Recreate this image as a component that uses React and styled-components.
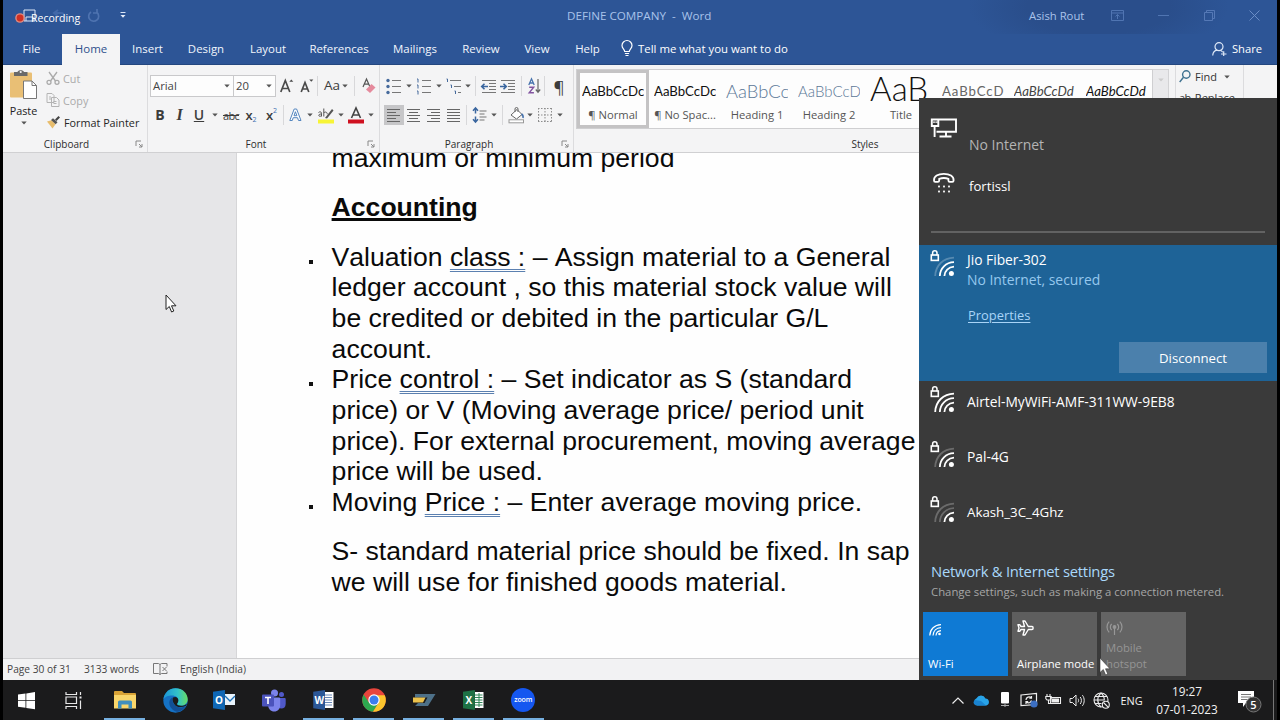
import React from "react";
import styled, { createGlobalStyle } from "styled-components";

const Global = createGlobalStyle`
  * { box-sizing: border-box; }
  html, body { margin: 0; padding: 0; background: #000; overflow: hidden; }
  body { font-family: "Open Sans", "Noto Sans", sans-serif; }
  svg { display: block; flex: none; overflow: visible; }
`;

const Screen = styled.div`
  position: relative;
  width: 1280px;
  height: 720px;
  background: #000;
  padding: 0 3px;
  display: flex;
  flex-direction: column;
  overflow: hidden;
  white-space: pre;
`;

/* ---------- title bar and tabs ---------- */
const TitleBar = styled.header`
  flex: none;
  height: 34px;
  background: radial-gradient(ellipse 130px 50px at 86% 20%, #2a4e8b 55%, #2d559600 100%), #2d5596;
  display: flex;
  align-items: center;
  color: #a9c3ea;
  font-size: 11.3px;
  padding-bottom: 3px;
`;
const QuickAccess = styled.div`
  width: 564px;
  display: flex;
  align-items: center;
  padding-left: 18px;
`;
const DocTitle = styled.div`
  width: 462px;
  font-size: 11.65px;
`;
const UserName = styled.div`
  width: 82px;
`;
const WindowButtons = styled.div`
  display: flex;
  align-items: center;
  gap: 34px;
`;
const TabRow = styled.nav`
  flex: none;
  height: 31px;
  background: #2d5596;
  border-bottom: 1px solid #24477f;
  display: flex;
  color: #fff;
  font-size: 11.45px;
`;
const Tab = styled.div`
  width: ${(p) => p.$w}px;
  display: flex;
  align-items: center;
  justify-content: center;
  padding-bottom: 1px;
  background: ${(p) => (p.$active ? "#f4f4f5" : "transparent")};
  color: ${(p) => (p.$active ? "#2d4f8c" : "#f2f6fd")};
  ${(p) => p.$active && "height: 31px; padding-bottom: 2px;"}
`;
const TellMe = styled.div`
  display: flex;
  align-items: center;
  gap: 4px;
  padding: 0 0 1px 8px;
  font-size: 11.4px;
`;
const Share = styled.div`
  margin-left: auto;
  padding: 0 15px 1px 0;
  display: flex;
  align-items: center;
  gap: 5px;
  font-size: 11.2px;
`;

/* ---------- ribbon ---------- */
const Ribbon = styled.section`
  flex: none;
  height: 88px;
  background: #f4f4f5;
  border-bottom: 1px solid #d0d0d2;
  display: flex;
  color: #333;
`;
const Group = styled.div`
  width: ${(p) => p.$w}px;
  flex: none;
  display: flex;
  flex-direction: column;
  border-right: 1px solid #dcdcde;
  overflow: hidden;
`;
const GroupBody = styled.div`
  height: 71px;
  padding: ${(p) => p.$pad || "0"};
  display: flex;
  flex-direction: ${(p) => (p.$row ? "row" : "column")};
`;
const GroupFooter = styled.div`
  height: 16px;
  display: flex;
  align-items: center;
  font-size: 10px;
  line-height: 14px;
  color: #2d2d2d;
  padding-right: 4px;
`;
const FooterLabel = styled.div`
  flex: 1;
  text-align: center;
  padding-right: ${(p) => p.$shift || 0}px;
`;
const PasteButton = styled.div`
  width: 41px;
  display: flex;
  flex-direction: column;
  align-items: center;
  font-size: 10.8px;
  color: #222;
  gap: 3px;
`;
const CommandList = styled.div`
  display: flex;
  flex-direction: column;
  padding-left: 2px;
  margin-top: -2px;
`;
const Command = styled.div`
  height: 22px;
  display: flex;
  align-items: center;
  gap: 3px;
  font-size: 10.8px;
  color: ${(p) => (p.$off ? "#aaa" : "#262626")};
`;
const ToolRow = styled.div`
  height: ${(p) => p.$h || 24}px;
  display: flex;
  align-items: center;
`;
const Cell = styled.div`
  width: ${(p) => p.$w}px;
  height: 20px;
  flex: none;
  display: flex;
  align-items: center;
  justify-content: center;
  background: ${(p) => (p.$on ? "#c6c6c8" : "transparent")};
  font-size: ${(p) => p.$size || 13}px;
  line-height: 1;
  color: #3c3c3c;
`;
const Divider = styled.div`
  width: 1px;
  height: 20px;
  flex: none;
  background: #d8d8da;
  margin: 0 ${(p) => p.$r}px 0 ${(p) => p.$l}px;
`;
const Combo = styled.div`
  width: ${(p) => p.$w}px;
  height: 22px;
  flex: none;
  border: 1px solid #c9c9cb;
  background: #fdfdfd;
  display: flex;
  align-items: center;
  justify-content: space-between;
  padding: 0 3px 1px 2px;
  margin-right: -1px;
  font-size: 11.3px;
  color: #444;
`;
const Glyph = styled.span`
  font-weight: ${(p) => p.$weight || 400};
  font-style: ${(p) => (p.$italic ? "italic" : "normal")};
  font-family: ${(p) => (p.$serif ? '"Liberation Serif", serif' : "inherit")};
  text-decoration: ${(p) => p.$line || "none"};
  letter-spacing: ${(p) => p.$ls || 0}px;
`;
const Sub = styled.span`
  font-size: 7px;
  color: #3b6db0;
  align-self: ${(p) => (p.$up ? "flex-start" : "flex-end")};
  padding: 2px 0;
`;
const Gallery = styled.div`
  width: 577px;
  height: 60px;
  border: 1px solid #cfcfd1;
  background: #fdfdfd;
  display: flex;
`;
const StyleTile = styled.div`
  width: 72px;
  height: 58px;
  flex: none;
  display: flex;
  flex-direction: column;
  align-items: center;
  ${(p) => p.$on && "box-shadow: inset 0 0 0 3px #c4c3c4;"}
`;
const Sample = styled.div`
  width: 62px;
  height: 37px;
  overflow: hidden;
  display: flex;
  align-items: center;
  font-family: Lato, sans-serif;
  font-size: ${(p) => p.$size || 13.2}px;
  font-weight: ${(p) => p.$weight || 400};
  font-style: ${(p) => (p.$italic ? "italic" : "normal")};
  letter-spacing: ${(p) => p.$ls || 0}px;
  line-height: 1;
  color: ${(p) => p.$color || "#111"};
  padding-top: ${(p) => (p.$pt === undefined ? 6 : p.$pt)}px;
`;
const StyleName = styled.div`
  font-size: 11.2px;
  line-height: 15px;
  color: #555;
`;
const ScrollColumn = styled.div`
  width: 16px;
  height: 60px;
  border: 1px solid #d3d3d5;
  border-left: 0;
  background: #e9e9eb;
  display: flex;
  justify-content: center;
  padding-top: 8px;
`;
const EditCommand = styled.div`
  height: 21px;
  display: flex;
  align-items: center;
  gap: 4px;
  font-size: 11px;
  color: #333;
`;

/* ---------- document ---------- */
const Workspace = styled.main`
  flex: none;
  height: 505px;
  display: flex;
  background: #e6e6e8;
  overflow: hidden;
`;
const Gutter = styled.div`
  width: 234px;
  flex: none;
  border-right: 1px solid #d6d6d8;
`;
const Page = styled.article`
  flex: 1;
  background: #fefefe;
  padding-left: 94.6px;
  font-family: "Liberation Sans", Arial, sans-serif;
  font-size: 26.6px;
  font-kerning: none;
  line-height: 30.67px;
  color: #0a0a0a;
`;
const Para = styled.p`
  margin: ${(p) => p.$mt}px 0 0;
`;
const Heading = styled.h1`
  margin: 18.6px 0;
  font-size: 26.6px;
  line-height: 30.67px;
  font-weight: 700;
  text-decoration: underline;
  text-decoration-thickness: 3px;
  text-underline-offset: 2.4px;
`;
const List = styled.ul`
  margin: 0;
  padding: 0;
  list-style: none;
`;
const Item = styled.li`
  display: flex;
  margin-left: -23px;
  &::before {
    content: "";
    flex: none;
    width: 4px;
    height: 4px;
    margin: 18px 19px 0 0;
    background: #111;
  }
`;
const Grammar = styled.span`
  text-decoration: underline double #5b80b0 1px;
  text-underline-offset: 3px;
`;

/* ---------- status bar ---------- */
const StatusBar = styled.footer`
  flex: none;
  height: 22px;
  background: #f2f2f3;
  border-top: 1px solid #cfcfd1;
  display: flex;
  align-items: center;
  padding: 0 0 2px 4px;
  font-size: 10.2px;
  color: #444;
`;
const StatusText = styled.div`
  width: ${(p) => p.$w}px;
`;

/* ---------- taskbar ---------- */
const Taskbar = styled.div`
  flex: none;
  height: 40px;
  background: #1b1b1c;
  display: flex;
  color: #f2f2f2;
`;
const TaskButton = styled.div`
  width: ${(p) => p.$w || 49.9}px;
  height: 40px;
  display: flex;
  align-items: center;
  justify-content: center;
  background: ${(p) => (p.$open ? "linear-gradient(#76b0e0, #76b0e0) center bottom / 41px 2.5px no-repeat" : "none")};
`;
const Tray = styled.div`
  margin-left: auto;
  width: 330px;
  display: flex;
  align-items: center;
`;
const TrayCell = styled.div`
  width: ${(p) => p.$w}px;
  display: flex;
  justify-content: center;
  font-size: 10.9px;
`;
const Clock = styled.div`
  width: 83px;
  padding-right: 7px;
  text-align: center;
  font-size: 11.8px;
  line-height: 18px;
`;
const PeekEdge = styled.div`
  margin-left: auto;
  width: 4px;
  height: 40px;
  border-left: 1px solid #777;
`;

/* ---------- network flyout ---------- */
const Flyout = styled.aside`
  position: absolute;
  left: 919px;
  top: 98px;
  width: 358px;
  height: 582px;
  background: #3a3a3a;
  color: #fff;
  display: flex;
  flex-direction: column;
`;
const NetRow = styled.div`
  flex: none;
  height: ${(p) => p.$h}px;
  padding: ${(p) => p.$pt}px 0 0 11px;
  display: flex;
  align-items: flex-start;
`;
const NetIcon = styled.div`
  width: ${(p) => p.$w || 37}px;
  padding-left: ${(p) => p.$pl || 0}px;
  flex: none;
`;
const NetName = styled.div`
  font-size: ${(p) => p.$size || 13.8}px;
  line-height: ${(p) => p.$lh || 20}px;
  color: ${(p) => p.$color || "#fff"};
  padding-top: ${(p) => p.$pt || 0}px;
`;
const Rule = styled.div`
  flex: none;
  height: 2px;
  margin: 0 12px 12px;
  background: #626262;
`;
const Connected = styled.div`
  flex: none;
  height: 136px;
  background: #1e6397;
  display: flex;
  flex-direction: column;
`;
const PropertiesLink = styled.a`
  margin: 5px 0 0 49px;
  font-size: 12.9px;
  line-height: 20px;
  color: #a9d4f7;
  text-decoration: underline;
  text-underline-offset: 2px;
`;
const Disconnect = styled.button`
  width: 148px;
  height: 31px;
  margin: 17px 10px 0 auto;
  border: 0;
  padding: 0;
  background: #4b80ac;
  color: #fff;
  font: 13.2px "Open Sans", sans-serif;
  flex: none;
`;
const SettingsLink = styled.div`
  padding: 24px 0 0 12px;
  font-size: 14.8px;
  line-height: 22px;
  letter-spacing: -0.25px;
  color: #a9d8fb;
`;
const SettingsHint = styled.div`
  padding: 1px 0 0 12px;
  font-size: 11.35px;
  line-height: 18px;
  color: #a6a6a6;
`;
const Tiles = styled.div`
  display: flex;
  gap: 4px;
  padding: 11px 0 0 4px;
`;
const Tile = styled.div`
  width: 85px;
  height: 64px;
  background: ${(p) => (p.$on ? "#0f7ad4" : p.$off ? "#646464" : "#5e5e5e")};
  color: ${(p) => (p.$off ? "#959595" : "#fff")};
  display: flex;
  flex-direction: column;
  justify-content: space-between;
  padding: ${(p) => p.$pt || 8}px 0 5px 5px;
  font-size: 11.3px;
  line-height: 15.5px;
`;

/* ---------- overlays ---------- */
const RecordingBadge = styled.div`
  position: absolute;
  left: 15px;
  top: 9px;
  height: 18px;
  display: flex;
  align-items: center;
  color: #fff;
  font-size: 10.5px;
`;
const RecordingText = styled.span`
  margin-left: 6px;
`;
const Pointer = styled.div`
  position: absolute;
  left: ${(p) => p.$x}px;
  top: ${(p) => p.$y}px;
`;

const Caret = ({ color = "#555" }) => (
  <svg width="6" height="4" viewBox="0 0 6 4"><path d="M0.3 0.5h5.4L3 3.4z" fill={color} /></svg>
);
const Launcher = () => (
  <svg width="8" height="8" viewBox="0 0 8 8" fill="none" stroke="#888"><path d="M1 6V1h5M4 4l3 3M7 4v3H4" /></svg>
);
const Lines = ({ rows }) => (
  <svg width="14" height="15" viewBox="0 0 14 15" stroke="#666" strokeWidth="1">
    {rows.map(([a, b], i) => <path key={i} d={`M${a} ${1.5 + i * 3}H${b}`} />)}
  </svg>
);
const BulletIcon = ({ kind }) => (
  <svg width="16" height="15" viewBox="0 0 16 15">
    {[1.5, 7.5, 13.5].map((y, i) => (
      <g key={y}>
        {kind === "dot" && <circle cx="2" cy={y} r="1.7" fill="#466a9c" />}
        {kind === "num" && <path d={`M1 ${y - 1.5}h1v3.5`} stroke="#466a9c" fill="none" />}
        {kind === "tree" && <path d={`M${0.5 + i * 4} ${y - 1.5}h1v3`} stroke="#466a9c" fill="none" />}
        <path d={`M${kind === "tree" ? 4 + i * 4 : 6} ${y}H15`} stroke="#777" />
      </g>
    ))}
  </svg>
);
const IndentIcon = ({ right }) => (
  <svg width="16" height="15" viewBox="0 0 16 15" fill="none">
    <path d="M1 1.5h14M8 4.5h7M8 7.5h7M8 10.5h7M1 13.5h14" stroke="#777" />
    <path d={right ? "M0 7.5h6M3.5 4.7l2.8 2.8-2.8 2.8" : "M7 7.5H1M3.5 4.7L.7 7.5l2.8 2.8"} stroke="#3a669f" strokeWidth="1.6" />
  </svg>
);
const WifiLock = ({ level }) => (
  <svg width="25" height="28" viewBox="0 0 25 28" fill="none">
    <path d="M2.6 6.2V4a2.2 2.2 0 0 1 4.4 0v2.2" stroke="#fff" strokeWidth="1.5" />
    <rect x="1.3" y="6" width="7" height="5.4" stroke="#fff" strokeWidth="1.6" />
    <circle cx="21.4" cy="24.5" r="2.5" fill="#fff" />
    <g stroke="#fff" strokeWidth="1.8">
      <path d="M14.4 27c.2-5 4-9 9.6-9.3" />
      <path d="M9.8 27C10.1 19.3 15.7 13.5 24 13.2" opacity={level > 1 ? 1 : 0.25} />
      <path d="M5.2 27C5.5 16.6 13.2 8.9 24 8.6" opacity={level > 2 ? 1 : 0.25} />
    </g>
  </svg>
);
const WifiSmall = () => (
  <svg width="15" height="15" viewBox="0 0 15 15" fill="none" stroke="#fff" strokeWidth="1.2">
    <circle cx="11.5" cy="12" r="1.3" fill="#fff" stroke="none" />
    <path d="M8 13.5c.2-2.8 2.2-4.6 5-4.8M5 13.5c.2-4.5 3.5-7.6 8-7.8M1.8 13.5C2 7.2 6.6 2.9 13 2.6" />
  </svg>
);
const PlaneIcon = () => (
  <svg width="17" height="17" viewBox="0 0 17 17" fill="none" stroke="#fff" strokeWidth="1.4" strokeLinejoin="round">
    <path d="M6 1h2l3.3 5.5H15c1.500 0 1.500 3 0 3h-3.700L8 15H6l1.500-5.500H4L2.700 11.300H1L2 8 1 4.700h1.700L4 6.500h3.500z" />
  </svg>
);
const HotspotIcon = () => (
  <svg width="17" height="15" viewBox="0 0 17 15" fill="none" stroke="#979797" strokeWidth="1.2">
    <circle cx="8.5" cy="6" r="1.3" fill="#979797" />
    <path d="M8.500 6v8M5.700 9a4 4 0 0 1 0-6M11.300 9a4 4 0 0 0 0-6M3.200 11.300a7.500 7.500 0 0 1 0-10.600M13.800 11.300a7.500 7.500 0 0 0 0-10.600" />
  </svg>
);
const MonitorIcon = () => (
  <svg width="28" height="22" viewBox="0 0 28 22" fill="none" stroke="#fff" strokeWidth="1.9">
    <path d="M9 2.500h17v12.300H6.500M1.800 2.500h6.500v6.500H1.800zM4.600 9v11M4 4.500v1.200M6.300 4.500v1.200M16 15v4M9.500 19.500h12" />
  </svg>
);
const PhoneIcon = () => (
  <svg width="24" height="23" viewBox="0 0 24 23" fill="none">
    <path d="M2 8.500C1.700 4 6 1.800 11.800 1.800S21.900 4 21.600 8.500c0 .9-.5 1.300-1.300 1.300h-2.600c-.9 0-1.300-.5-1.300-1.300V6.800c-2.800-1-6.300-1-9.200 0v1.700c0 .8-.5 1.300-1.300 1.300H3.300C2.500 9.800 2 9.400 2 8.500z" stroke="#fff" strokeWidth="1.8" />
    {[14.5, 19.5].map((y) => [7, 12, 17].map((x) => <rect key={x + "-" + y} x={x - 0.9} y={y - 0.9} width="1.8" height="1.8" fill="#fff" />))}
  </svg>
);
const PasteIcon = () => (
  <svg width="29" height="31" viewBox="0 0 29 31">
    <rect x="1" y="3.5" width="22" height="25" rx="1" fill="#e9bf75" />
    <path d="M5 3h3.500C9 .5 14.500.5 15 3h3.500v4H5z" fill="#6a6a6a" />
    <circle cx="11.7" cy="3" r="1.1" fill="#f4f4f5" />
    <path d="M14.500 12h8.500l4.500 4.500v13h-13z" fill="#fff" stroke="#777" />
    <path d="M23 12v4.500h4.500" fill="none" stroke="#777" />
  </svg>
);
const CutIcon = () => (
  <svg width="14" height="14" viewBox="0 0 14 14" fill="none" stroke="#aaa" strokeWidth="1.3">
    <path d="M3 1l6.500 9M11 1L4.500 10" /><circle cx="3" cy="11.3" r="2" /><circle cx="11" cy="11.3" r="2" />
  </svg>
);
const CopyIcon = () => (
  <svg width="14" height="14" viewBox="0 0 14 14" fill="#f4f4f5" stroke="#b4b4b4">
    <path d="M1 .5h5l2 2v7H1zM5.500 4.500h5l2.500 2.500v6.500H5.500zM7.500 8.500h3M7.500 10.500h3M3 4h2M3 6h2" />
  </svg>
);
const PainterIcon = () => (
  <svg width="15" height="14" viewBox="0 0 15 14">
    <path d="M1 6.500l4.500-1.300 4 4L6.500 13.500z" fill="#e8bd6d" />
    <path d="M5 5l2-1.700 4.500 4L9.700 9.300z" fill="#555" /><path d="M9 4.500L12.500 1 14 2.500 10.500 6z" fill="#444" />
  </svg>
);
const AzIcon = () => (
  <svg width="13" height="16" viewBox="0 0 13 16" fill="none">
    <path d="M.8 7L3.500.8 6.200 7M1.700 5h3.600" stroke="#4672ad" strokeWidth="1.3" />
    <path d="M1.200 9.200h4.500L1.200 14.700h4.700" stroke="#8254a0" strokeWidth="1.4" />
    <path d="M10 1v13M7.800 11.500l2.200 2.700 2.200-2.700" stroke="#666" strokeWidth="1.2" />
  </svg>
);
const SpacingIcon = () => (
  <svg width="16" height="16" viewBox="0 0 16 16" fill="none">
    <path d="M3.500 1v5.500M1 3.800L3.500 1 6 3.800M3.500 9.500V15M1 12.200L3.500 15 6 12.200" stroke="#3a669f" strokeWidth="1.5" />
    <path d="M7.500 4h7M7.500 7h5M7.500 10h7M7.500 13h5" stroke="#777" />
  </svg>
);
const ShadingIcon = () => (
  <svg width="17" height="17" viewBox="0 0 17 17" fill="none">
    <path d="M3 8l6-5.500 5 5L8.500 12z" fill="#fff" stroke="#666" /><path d="M7 5V2a1.500 1.500 0 0 1 3 0v3" stroke="#666" />
    <path d="M13.500 7c1.700 1 1.800 2.500 1.500 4" stroke="#4672ad" strokeWidth="1.6" /><rect x="1" y="12.8" width="14.5" height="3" fill="#fff" stroke="#999" />
  </svg>
);
const BorderIcon = () => (
  <svg width="16" height="16" viewBox="0 0 16 16" fill="none" stroke="#8d8d8d"><path strokeDasharray="1.5 1.5" d="M1.500 1v14M14.500 1v14M8 1v14M1 1.500h14M1 8h14M1 14.500h14" /></svg>
);
const TextColor = ({ bar, children }) => (
  <svg width="18" height="17" viewBox="0 0 18 17"><rect x="1" y="12.5" width="16" height="4" fill={bar} />{children}</svg>
);
const EraserIcon = () => (
  <svg width="14" height="16" viewBox="0 0 14 16" fill="none"><path d="M1 9l3.500-8L8 9M2.200 6.200h4.600" stroke="#555" strokeWidth="1.2" /><path d="M4 11.500l5.500-5.500 4 3.500-5.500 5.500z" fill="#e58a9c" /></svg>
);
const BigA = ({ small }) => (
  <svg width="14" height="16" viewBox="0 0 14 16" fill="none">
    <path d={small ? "M1.2 14L5 4.5 8.8 14M2.5 11h5" : "M.8 14L5.3 2.5 9.8 14M2.4 10.5h5.8"} stroke="#4a4a4a" strokeWidth="1.7" />
    <path d={small ? "M9.3 1.500h4L11.300 3.800z" : "M9.3 3.800h4L11.300 1.500z"} fill="#4a4a4a" />
  </svg>
);

const Windows = () => (
  <svg width="17" height="17" viewBox="0 0 17 17" fill="#fff"><path d="M0 2.500l7.500-1v6.700H0zM8.300 1.400L17 0v8.200H8.300zM0 9h7.500v6.700l-7.500-1zM8.300 9H17v8.200l-8.700-1.300z" /></svg>
);
const TaskView = () => (
  <svg width="18" height="17" viewBox="0 0 18 17" fill="none" stroke="#e8e8e8" strokeWidth="1.2"><path d="M1 0v2.500h10.500V0M1 5h10.500v6.500H1zM1 17v-2.500h10.500V17M15.500 0v3M15.500 8.500V17" /><rect x="14.5" y="4.5" width="2" height="2" fill="#e8e8e8" stroke="none" /></svg>
);
const Explorer = () => (
  <svg width="22" height="20" viewBox="0 0 22 20"><path d="M0 2a1 1 0 0 1 1-1h7l2 2h11a1 1 0 0 1 1 1v14H0z" fill="#d9a336" /><path d="M0 5h22v13.500H0z" fill="#f9d66b" /><path d="M4 18.500V12a1.500 1.500 0 0 1 1.500-1.500h11A1.500 1.500 0 0 1 18 12v6.500h-3.500v-4h-7v4z" fill="#3f8fbe" /></svg>
);
const Edge = () => (
  <svg width="25" height="25" viewBox="0 0 24 24">
    <defs><linearGradient id="edgeTop" x1="0" x2="1"><stop offset="0" stopColor="#1b94d8" /><stop offset=".6" stopColor="#33c4c8" /><stop offset="1" stopColor="#68dd62" /></linearGradient></defs>
    <circle cx="12" cy="12" r="11.7" fill="#1572c4" />
    <path d="M.4 11C1.200 4.500 6 .3 12 .3c6.500 0 11.700 4.700 11.700 10.400 0 3.800-3 6.300-6.500 6.300-2.200 0-3.700-.8-3.700-1.700 0-.7 1.200-1.300 1.200-3.500 0-2.400-2.300-4.600-6-4.600C4.800 7.200 1.500 8.700.4 11z" fill="url(#edgeTop)" />
    <path d="M9 9c-2.500 1.300-3.500 4-2.700 7 .9 3.600 4.500 6.700 8.300 6.900 3-.8 5.800-2.800 7.300-5.700-3.200 1.900-7 1.800-9.400.3C9.800 15.800 8.500 12.300 9 9z" fill="#124f96" />
    <path d="M13.500 15.300c0-.7 1.200-1.300 1.200-3.500 0-2.300-2-4.200-5.200-2.700-1 3 .7 6.500 3 8.100 2.700 1.500 6.200 1.600 9.500-.2L23 15c-2 1.700-3.800 2-5.800 2-2.200 0-3.700-.8-3.700-1.700z" fill="#1b1b1c" />
  </svg>
);
const OfficeLetter = styled.div`
  width: 12px;
  height: 20px;
  background: ${(p) => p.$bg};
  clip-path: polygon(0 9%, 100% 0, 100% 100%, 0 91%);
  display: flex;
  align-items: center;
  justify-content: center;
  font-size: 10px;
  font-weight: 700;
  color: #fff;
`;
const OfficeIcon = styled.div`
  display: flex;
  align-items: center;
`;
const Teams = () => (
  <svg width="25" height="23" viewBox="0 0 25 23"><circle cx="20.5" cy="5.5" r="2.5" fill="#5059c9" /><circle cx="13.5" cy="4" r="3.5" fill="#7b83eb" /><path d="M16 9h7.500c.8 0 1.200.5 1.200 1.200V15c0 3-2 4.500-4.200 4.500S16 18 16 15z" fill="#5059c9" /><path d="M7.500 8.500H18c.8 0 1.200.6 1.200 1.300V16c0 4-2.500 6.500-6 6.500s-6-2.500-6-6.500z" fill="#7b83eb" /><rect x="1" y="5.5" width="12" height="12" rx="1" fill="#4b53bc" /><path d="M4 8.500h6M7 8.500v6.500" stroke="#fff" strokeWidth="1.6" /></svg>
);
const Chrome = () => (
  <svg width="24" height="24" viewBox="0 0 24 24"><circle cx="12" cy="12" r="11.8" fill="#e8453c" /><path d="M1.600 6.500A11.800 11.800 0 0 0 11 23.800L16.800 14.600 12 12 7 14.500z" fill="#2da94f" /><path d="M11 23.800A11.800 11.800 0 0 0 22.800 7.200H12l4.800 7.400z" fill="#fbc52d" /><circle cx="12" cy="12" r="5.7" fill="#fff" /><circle cx="12" cy="12" r="4.5" fill="#3b7ded" /></svg>
);
const SapIcon = () => (
  <svg width="24" height="14" viewBox="0 0 24 14"><path d="M3 1h20.500l-7.500 12H3l3-3h6.500l3-5.500H3z" fill="#4d7088" /><path d="M1 4.500h12.500L11 9.500H1z" fill="#ecc24c" /></svg>
);
const ZoomBadge = styled.div`
  width: 24px;
  height: 24px;
  border-radius: 50%;
  background: #1557f0;
  color: #fff;
  font-size: 7px;
  font-weight: 600;
  letter-spacing: -0.1px;
  display: flex;
  align-items: center;
  justify-content: center;
  padding-bottom: 1px;
`;

const TABS = [["File", 57], ["Home", 58], ["Insert", 55], ["Design", 62], ["Layout", 62], ["References", 80], ["Mailings", 72], ["Review", 60], ["View", 52], ["Help", 49]];
const TabGap = styled.div`
  width: 2px;
`;

function WordHeader() {
  return (
    <>
      <TitleBar>
        <QuickAccess>
          <svg width="110" height="16" viewBox="0 0 110 16" fill="none">
            <path d="M3 2h11v11H3zM5 13v-4h7v4" stroke="#dbe6f7" />
            <path d="M34 5h6a4 4 0 0 1 0 8M37 2l-4 3 4 3" stroke="#4268a8" strokeWidth="2" />
            <path d="M76 4.500A5 5 0 1 1 70 4M76 1v4h-4" stroke="#4e73b0" strokeWidth="1.7" />
            <path d="M99.500 4.500h5" stroke="#dbe6f7" /><path d="M99.500 7h5L102 9.700z" fill="#e6eefa" />
          </svg>
        </QuickAccess>
        <DocTitle>DEFINE COMPANY  -  Word</DocTitle>
        <UserName>Asish Rout</UserName>
        <WindowButtons>
          <svg width="13" height="11" viewBox="0 0 13 11" fill="none" stroke="#5075b2"><path d="M.5.5h12v10H.5zM.5 3h12M6.500 9V4.500M4.500 6.500l2-2 2 2" /></svg>
          <svg width="12" height="11" viewBox="0 0 12 11" stroke="#5075b2"><path d="M0 5.500h11" /></svg>
          <svg width="11" height="11" viewBox="0 0 11 11" fill="none" stroke="#5579b6"><path d="M.5 2.500h8v8h-8zM2.500 2.500v-2h8v8h-2" /></svg>
          <svg width="11" height="11" viewBox="0 0 11 11" stroke="#6a8dc6"><path d="M.5.5l10 10M10.500.5l-10 10" /></svg>
        </WindowButtons>
      </TitleBar>
      <TabRow>
        {TABS.map(([name, w]) => (
          <React.Fragment key={name}>
            {name === "Home" && <TabGap />}
            <Tab $w={w} $active={name === "Home"}>{name}</Tab>
          </React.Fragment>
        ))}
        <TellMe>
          <svg width="14" height="17" viewBox="0 0 14 17" fill="none" stroke="#fff" strokeWidth="1.2"><path d="M4.700 11.500c0-2-2.700-3-2.700-6a5 5 0 0 1 10 0c0 3-2.700 4-2.700 6zM4.900 13.500h4.200M5.500 15.500h3" /></svg>
          Tell me what you want to do
        </TellMe>
        <Share>
          <svg width="15" height="14" viewBox="0 0 15 14" fill="none" stroke="#dfe9f8" strokeWidth="1.2"><circle cx="7" cy="4.7" r="4" /><path d="M.7 13.500c.3-3 2-5 4.300-5.300M8.500 8.500c1 .3 1.700 1 2.200 1.800M9 12h5.500M11.700 9.300v4.700" /></svg>
          Share
        </Share>
      </TabRow>
    </>
  );
}

const SAMPLES = [
  { name: "¶ Normal", on: true },
  { name: "¶ No Spac..." },
  { name: "Heading 1", size: 18.4, color: "#5b7897", weight: 300, pt: 5 },
  { name: "Heading 2", size: 15, color: "#5b7897", weight: 300, pt: 6 },
  { name: "Title", size: 33, text: "AaB", color: "#111", weight: 300, pt: 0 },
  { name: "Subtitle", color: "#666", ls: 0.9, text: "AaBbCcD" },
  { name: "Subtle Em...", italic: true, color: "#444", text: "AaBbCcDd" },
  { name: "Emphasis", italic: true, text: "AaBbCcDd" },
];

function RibbonBar() {
  return (
    <Ribbon>
      <Group $w={145}>
        <GroupBody $row $pad="4px 0 0 0">
          <PasteButton><PasteIcon />Paste<Caret /></PasteButton>
          <CommandList>
            <Command $off><CutIcon />Cut</Command>
            <Command $off><CopyIcon />Copy</Command>
            <Command><PainterIcon />Format Painter</Command>
          </CommandList>
        </GroupBody>
        <GroupFooter><FooterLabel $shift={5}>Clipboard</FooterLabel><Launcher /></GroupFooter>
      </Group>
      <Group $w={232}>
        <GroupBody $pad="9px 0 0 2px">
          <ToolRow>
            <Combo $w={84}>Arial<Caret /></Combo>
            <Combo $w={43}>20<Caret /></Combo>
            <Cell $w={23}><BigA /></Cell>
            <Cell $w={17}><BigA small /></Cell>
            <Divider $l={2} $r={5} />
            <Cell $w={18} $size={13.5}><Glyph>Aa</Glyph></Cell><Cell $w={8}><Caret /></Cell>
            <Divider $l={5} $r={6} />
            <Cell $w={16}><EraserIcon /></Cell>
          </ToolRow>
          <ToolRow $h={34}>
            <Cell $w={20} $size={14}><Glyph $weight={700}>B</Glyph></Cell>
            <Cell $w={19} $size={16}><Glyph $weight={700} $italic $serif>I</Glyph></Cell>
            <Cell $w={20} $size={14}><Glyph $weight={600} $line="underline">U</Glyph></Cell>
            <Cell $w={12}><Caret /></Cell>
            <Cell $w={20} $size={11}><Glyph $line="line-through" $ls={-0.7}>abc</Glyph></Cell>
            <Cell $w={20} $size={13}><Glyph $weight={600}>x</Glyph><Sub>2</Sub></Cell>
            <Cell $w={21} $size={13}><Glyph $weight={600}>x</Glyph><Sub $up>2</Sub></Cell>
            <Divider $l={1} $r={4} />
            <Cell $w={15}><svg width="13" height="14" viewBox="0 0 13 14"><path d="M.8 12.500L5.200 1h2.400L12 12.500H9.500L8.500 9.700H4.200L3.300 12.500zM5 7.700h2.900L6.400 3.700z" fill="#fff" stroke="#5486bf" /></svg></Cell>
            <Cell $w={13}><Caret /></Cell>
            <Cell $w={20}><TextColor bar="#f7f436"><path d="M8 11l7-9 1.500 1.500-6.500 8z" fill="#555" /><path d="M1.500 5.500c1-1 3-1 3 .8V9.500M4.500 7c-3-.3-3.500 2.300-1.500 2.300.8 0 1.500-.6 1.500-1M6.800 1.500v8M6.800 6c1-1.700 3.700-1 3.400 1.200" fill="none" stroke="#555" /></TextColor></Cell>
            <Cell $w={10}><Caret /></Cell>
            <Cell $w={19}><TextColor bar="#cf1020"><path d="M4.500 11L9 1l4.500 10M6 8h6" fill="none" stroke="#444" strokeWidth="1.6" /></TextColor></Cell>
            <Cell $w={11}><Caret /></Cell>
          </ToolRow>
        </GroupBody>
        <GroupFooter><FooterLabel $shift={3}>Font</FooterLabel><Launcher /></GroupFooter>
      </Group>
      <Group $w={194}>
        <GroupBody $pad="9px 0 0 4px">
          <ToolRow>
            <Cell $w={19}><BulletIcon kind="dot" /></Cell><Cell $w={11}><Caret /></Cell>
            <Cell $w={19}><BulletIcon kind="num" /></Cell><Cell $w={11}><Caret /></Cell>
            <Cell $w={19}><BulletIcon kind="tree" /></Cell><Cell $w={10}><Caret /></Cell>
            <Divider $l={2} $r={3} />
            <Cell $w={19}><IndentIcon /></Cell>
            <Cell $w={20}><IndentIcon right /></Cell>
            <Divider $l={3} $r={4} />
            <Cell $w={16}><AzIcon /></Cell>
            <Divider $l={2} $r={6} />
            <Cell $w={16} $size={17}><Glyph>¶</Glyph></Cell>
          </ToolRow>
          <ToolRow $h={34}>
            <Cell $w={20} $on><Lines rows={[[0, 13], [0, 9], [0, 13], [0, 9], [0, 13]]} /></Cell>
            <Cell $w={20}><Lines rows={[[0, 13], [2, 11], [0, 13], [2, 11], [0, 13]]} /></Cell>
            <Cell $w={20}><Lines rows={[[0, 13], [4, 13], [0, 13], [4, 13], [0, 13]]} /></Cell>
            <Cell $w={20}><Lines rows={[[0, 13], [0, 13], [0, 13], [0, 13], [0, 13]]} /></Cell>
            <Divider $l={2} $r={4} />
            <Cell $w={18}><SpacingIcon /></Cell><Cell $w={10}><Caret /></Cell>
            <Divider $l={3} $r={4} />
            <Cell $w={18}><ShadingIcon /></Cell><Cell $w={10}><Caret /></Cell>
            <Cell $w={19}><BorderIcon /></Cell><Cell $w={11}><Caret /></Cell>
          </ToolRow>
        </GroupBody>
        <GroupFooter><FooterLabel $shift={3}>Paragraph</FooterLabel><Launcher /></GroupFooter>
      </Group>
      <Group $w={602}>
        <GroupBody $row $pad="4px 0 0 2px">
          <Gallery>
            {SAMPLES.map((s) => (
              <StyleTile key={s.name} $on={s.on}>
                <Sample $size={s.size} $color={s.color} $weight={s.weight} $italic={s.italic} $ls={s.ls} $pt={s.pt}>{s.text || "AaBbCcDc"}</Sample>
                <StyleName>{s.name}</StyleName>
              </StyleTile>
            ))}
          </Gallery>
          <ScrollColumn><Caret color="#ccc" /></ScrollColumn>
        </GroupBody>
        <GroupFooter><FooterLabel $shift={15}>Styles</FooterLabel></GroupFooter>
      </Group>
      <Group $w={68}>
        <GroupBody $pad="1px 0 0 3px">
          <EditCommand>
            <svg width="12" height="13" viewBox="0 0 12 13" fill="none" stroke="#3f7290" strokeWidth="1.4"><circle cx="7.3" cy="4.5" r="3.7" /><path d="M4.500 7.300L.7 12" /></svg>
            Find <Caret />
          </EditCommand>
          <EditCommand><Glyph $ls={-0.5}>ab</Glyph>Replace</EditCommand>
        </GroupBody>
      </Group>
    </Ribbon>
  );
}

function DocumentArea() {
  return (
    <Workspace>
      <Gutter />
      <Page>
        <Para $mt={-9.8}>maximum or minimum period</Para>
        <Heading>Accounting</Heading>
        <List>
          <Item><div>Valuation <Grammar>class :</Grammar> – Assign material to a General{"\n"}ledger account , so this material stock value will{"\n"}be credited or debited in the particular G/L{"\n"}account.</div></Item>
          <Item><div>Price <Grammar>control :</Grammar> – Set indicator as S (standard{"\n"}price) or V (Moving average price/ period unit{"\n"}price). For external procurement, moving average{"\n"}price will be used.</div></Item>
          <Item><div>Moving <Grammar>Price :</Grammar> – Enter average moving price.</div></Item>
        </List>
        <Para $mt={18.6}>S- standard material price should be fixed. In sap{"\n"}we will use for finished goods material.</Para>
      </Page>
    </Workspace>
  );
}

function NetworkFlyout() {
  return (
    <Flyout>
      <NetRow $h={71} $pt={19}><NetIcon $w={39}><MonitorIcon /></NetIcon><NetName $color="#b4b4b4" $pt={18} $size={14}>No Internet</NetName></NetRow>
      <NetRow $h={62} $pt={3}><NetIcon $w={39} $pl={1.5}><PhoneIcon /></NetIcon><NetName $pt={4} $size={13.2}>fortissl</NetName></NetRow>
      <Rule />
      <Connected>
        <NetRow $h={55} $pt={4}>
          <NetIcon><WifiLock level={2} /></NetIcon>
          <div><NetName $lh={22}>Jio Fiber-302</NetName><NetName $color="#96c8ee" $size={13.9} $lh={18}>No Internet, secured</NetName></div>
        </NetRow>
        <PropertiesLink>Properties</PropertiesLink>
        <Disconnect>Disconnect</Disconnect>
      </Connected>
      <NetRow $h={55} $pt={4}><NetIcon><WifiLock level={3} /></NetIcon><NetName $pt={7}>Airtel-MyWiFi-AMF-311WW-9EB8</NetName></NetRow>
      <NetRow $h={54} $pt={4}><NetIcon><WifiLock level={2} /></NetIcon><NetName $pt={7}>Pal-4G</NetName></NetRow>
      <NetRow $h={46} $pt={5}><NetIcon><WifiLock level={1} /></NetIcon><NetName $pt={7} $size={13.3}>Akash_3C_4Ghz</NetName></NetRow>
      <SettingsLink>Network & Internet settings</SettingsLink>
      <SettingsHint>Change settings, such as making a connection metered.</SettingsHint>
      <Tiles>
        <Tile $on $pt={10}><WifiSmall />Wi-Fi</Tile>
        <Tile><PlaneIcon />Airplane mode</Tile>
        <Tile $off $pt={9}><HotspotIcon />{"Mobile\nhotspot"}</Tile>
      </Tiles>
    </Flyout>
  );
}

function TaskbarRow() {
  return (
    <Taskbar>
      <TaskButton $w={46}><Windows /></TaskButton>
      <TaskButton $w={49}><TaskView /></TaskButton>
      <TaskButton $w={53} $open><Explorer /></TaskButton>
      <TaskButton $w={48}><Edge /></TaskButton>
      <TaskButton><OfficeIcon><OfficeLetter $bg="#0f67b5">O</OfficeLetter><svg width="10" height="12" viewBox="0 0 10 12"><path d="M0 0h10v11H0z" fill="#e9f3fb" /><path d="M0 2l5 5 5-5" stroke="#1b70b8" fill="none" strokeWidth="1.3" /></svg></OfficeIcon></TaskButton>
      <TaskButton><Teams /></TaskButton>
      <TaskButton $open><OfficeIcon><OfficeLetter $bg="#2b5797">W</OfficeLetter><svg width="9" height="16" viewBox="0 0 9 16"><path d="M0 0h8.500v16H0z" fill="#fff" /><path d="M0 3h7M0 5.500h7M0 8h7M0 10.500h7M0 13h7" stroke="#6686b6" /></svg></OfficeIcon></TaskButton>
      <TaskButton $open><Chrome /></TaskButton>
      <TaskButton $open><SapIcon /></TaskButton>
      <TaskButton $open><OfficeIcon><OfficeLetter $bg="#1e7145">X</OfficeLetter><svg width="9" height="16" viewBox="0 0 9 16"><path d="M0 0h8.500v16H0z" fill="#fff" /><path d="M0 3h7.500M0 5.500h7.500M0 8h7.500M0 10.500h7.500M0 13h7.500M4 1v14" stroke="#2e8657" /></svg></OfficeIcon></TaskButton>
      <TaskButton $open><ZoomBadge>zoom</ZoomBadge></TaskButton>
      <Tray>
        <TrayCell $w={22}><svg width="12" height="7" viewBox="0 0 12 7" fill="none" stroke="#eee" strokeWidth="1.2"><path d="M.5 6.500L6 1l5.500 5.500" /></svg></TrayCell>
        <TrayCell $w={25}><svg width="17" height="11" viewBox="0 0 17 11"><path d="M4 10.500A3.800 3.800 0 0 1 3.500 3.300 5 5 0 0 1 12.500 3.500 3.600 3.600 0 0 1 13.500 10.500z" fill="#28a3e8" /><path d="M2 5l6 1 5 4.500H4A3.800 3.800 0 0 1 .5 7z" fill="#1a83d0" /></svg></TrayCell>
        <TrayCell $w={22}><svg width="10" height="16" viewBox="0 0 10 16"><rect x="1" y="0" width="8" height="11.5" rx="1" fill="#fff" /><path d="M1 13.500h8M5 12v3" stroke="#aaa" /></svg></TrayCell>
        <TrayCell $w={26}><svg width="18" height="16" viewBox="0 0 18 16" fill="none" stroke="#eee" strokeWidth="1.2"><path d="M1 3l15.500-1.500v11L1 13.500zM1 3v10.500" /><path d="M6 8a3 3 0 0 1 5.300-2M11.500 8.500A3 3 0 0 1 6.500 10M11.500 4v2.200H9.300M6 12V9.700h2.200" /><circle cx="14" cy="12" r="3.6" fill="#3c6fc2" stroke="none" /></svg></TrayCell>
        <TrayCell $w={23}><svg width="17" height="12" viewBox="0 0 17 12" fill="none" stroke="#eee" strokeWidth="1.1"><path d="M5.500 3.500h10v6h-10zM2 0v2.500M5 0v2.500M.8 2.500h5.400v2L5 6H2L.8 4.500zM3.500 6v3.500h2" /><path d="M7 5h6.500v3H7z" fill="#eee" /></svg></TrayCell>
        <TrayCell $w={24}><svg width="16" height="13" viewBox="0 0 16 13" fill="none" stroke="#eee"><path d="M1 4.500h2.500L7 1v11L3.500 8.500H1zM9 4.700c.8 1 .8 2.600 0 3.600M11.200 3c1.600 2 1.600 5 0 7M13.400 1.200c2.400 3 2.400 7.600 0 10.600" /></svg></TrayCell>
        <TrayCell $w={25}><svg width="17" height="17" viewBox="0 0 17 17" fill="none" stroke="#eee" strokeWidth="1.1"><circle cx="8" cy="8" r="7" /><path d="M8 1C3.700 5 3.700 11 8 15M8 1c2.500 2.200 3.500 5 3.300 7.500M1 8h10M2 4.500h12M2 11.500h6.500" /><circle cx="12.8" cy="12.8" r="3.5" fill="#1b1b1c" /><path d="M10.500 10.500l4.600 4.600" /></svg></TrayCell>
        <TrayCell $w={35}>ENG</TrayCell>
        <Clock>{"19:27\n07-01-2023"}</Clock>
        <TrayCell $w={34}><svg width="25" height="24" viewBox="0 0 25 24"><path d="M1 3h16v12H9l-3 4v-4H1z" fill="#fff" /><path d="M4 6.500h10M4 9h10M4 11.500h6" stroke="#777" /><circle cx="16.5" cy="16.5" r="7.5" fill="#333" stroke="#777" /><text x="16.5" y="20.5" textAnchor="middle" fill="#fff" fontSize="11" fontWeight="600">5</text></svg></TrayCell>
        <PeekEdge />
      </Tray>
    </Taskbar>
  );
}

export default function App() {
  return (
    <Screen>
      <Global />
      <WordHeader />
      <RibbonBar />
      <DocumentArea />
      <StatusBar>
        <StatusText $w={77}>Page 30 of 31</StatusText>
        <StatusText $w={69}>3133 words</StatusText>
        <StatusText $w={27}><svg width="15" height="12" viewBox="0 0 15 12" fill="none" stroke="#777"><path d="M.5.5h5l1.500 1V11.500l-1.500-1h-5zM7 1.500l1.500-1h5.500v3M7 11.500l1.500-1h5.500v-2M9.500 4l4 4M13.500 4l-4 4" /></svg></StatusText>
        <StatusText $w={80}>English (India)</StatusText>
      </StatusBar>
      <TaskbarRow />
      <NetworkFlyout />
      <RecordingBadge>
        <svg width="10" height="10" viewBox="0 0 10 10"><circle cx="5" cy="5" r="4.8" fill="#e0897f" /><circle cx="5" cy="5" r="3.4" fill="#cf3023" /></svg>
        <RecordingText>Recording</RecordingText>
      </RecordingBadge>
      <Pointer $x={165} $y={294}>
        <svg width="12" height="19" viewBox="0 0 12 19"><path d="M1 1v14.500l3.300-3 2.300 5.500 2.200-1-2.300-5.200H11z" fill="#fff" stroke="#222" /></svg>
      </Pointer>
      <Pointer $x={1099} $y={657}>
        <svg width="12" height="19" viewBox="0 0 12 19"><path d="M1 1v14.500l3.300-3 2.300 5.500 2.200-1-2.300-5.200H11z" fill="#fff" stroke="#333" strokeWidth=".6" /></svg>
      </Pointer>
    </Screen>
  );
}
